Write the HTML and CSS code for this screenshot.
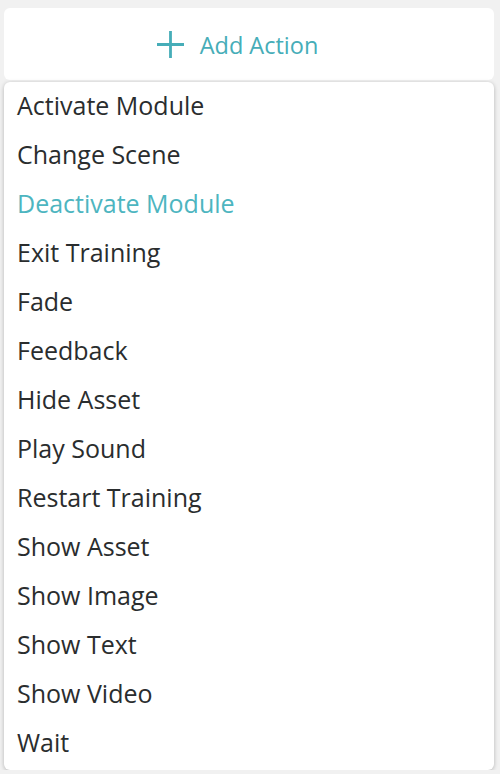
FILE: index.html
```html
<!DOCTYPE html>
<html>
<head>
<meta charset="utf-8">
<link rel="stylesheet" href="styles.css">
</head>
<body>
<div class="page">
  <button class="add-card">
    <svg class="plus" width="29" height="29" viewBox="0 0 29 29"><path d="M14.5 1V28M1 14.5H28" stroke="currentColor" stroke-width="2.8" fill="none"/></svg>
    <span>Add Action</span>
  </button>
  <ul class="menu">
    <li>Activate Module</li>
    <li>Change Scene</li>
    <li class="active">Deactivate Module</li>
    <li>Exit Training</li>
    <li>Fade</li>
    <li>Feedback</li>
    <li>Hide Asset</li>
    <li>Play Sound</li>
    <li>Restart Training</li>
    <li>Show Asset</li>
    <li>Show Image</li>
    <li>Show Text</li>
    <li>Show Video</li>
    <li>Wait</li>
  </ul>
</div>
</body>
</html>
```

FILE: styles.css
```css
html, body {
  margin: 0;
  padding: 0;
  background: #f1f1f1;
}
body {
  font-family: "Open Sans", "Noto Sans", sans-serif;
}
.page {
  display: flex;
  flex-direction: column;
  padding: 8px 6px 0 4px;
  gap: 2px;
}
.add-card {
  display: flex;
  align-items: center;
  justify-content: center;
  gap: 15px;
  height: 72px;
  border: none;
  border-radius: 6px;
  background: #ffffff;
  color: #46adb8;
  font-family: inherit;
  font-size: 23.5px;
  padding: 2px 24px 0 0;
}
.add-card .plus {
  color: #46adb8;
  margin-top: -2px;
}
.menu {
  list-style: none;
  margin: 0;
  padding: 0 0 2px 0;
  background: #ffffff;
  border-radius: 6px;
  box-shadow: 0 1px 4px rgba(0, 0, 0, 0.25);
}
.menu li {
  height: 49px;
  box-sizing: border-box;
  display: flex;
  align-items: center;
  padding: 0 0 3px 13px;
  font-size: 25px;
  color: #2a2d2e;
}
.menu li.active {
  color: #4db5c0;
}
```
